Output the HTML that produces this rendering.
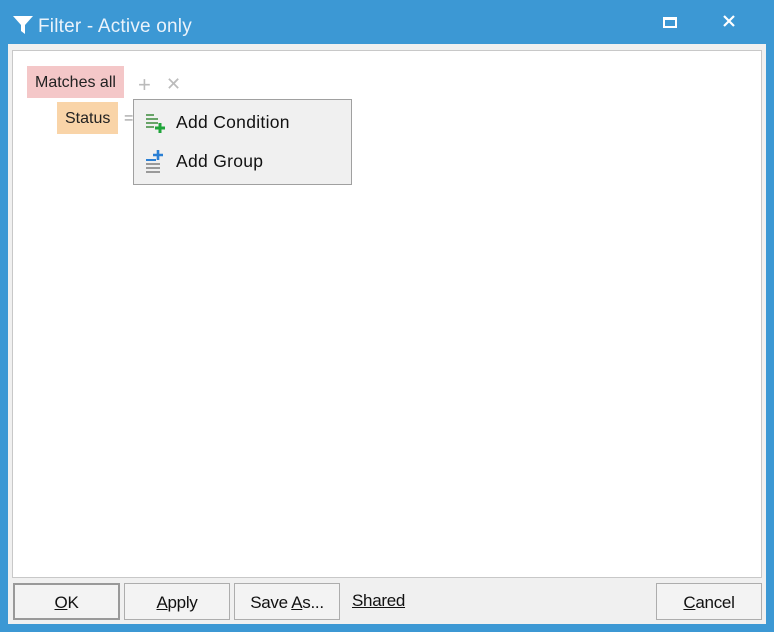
<!DOCTYPE html>
<html><head><style>
body{margin:0;width:774px;height:632px;background:#3c98d4;position:relative;overflow:hidden;font-family:"Segoe UI","Liberation Sans",sans-serif;}
.abs{position:absolute}
.title{left:38px;top:16px;color:#eaf3fb;font-size:19px;letter-spacing:0.2px}
.frame{left:8px;top:44px;width:758px;height:580px;background:#f0f0f0;}
.inner{left:12px;top:50px;width:748px;height:526px;background:#fff;border:1px solid #c8c8c8;}
.tag{font-size:16px;color:#222;padding:0 8px;height:32px;line-height:33px}
.btn{top:583px;height:35px;border:1px solid #adadad;background:#f3f3f3;font-size:17px;text-align:center;line-height:37px;color:#111;width:104px;letter-spacing:-0.3px}
.menu{left:133px;top:99px;width:217px;height:84px;background:#f0f0f0;border:1px solid #a0a0a0;}
.mi{font-size:17.5px;color:#111;left:42px;letter-spacing:0.3px}
</style></head><body>
<svg class="abs" style="left:12px;top:14px" width="22" height="22" viewBox="0 0 22 22"><path d="M1 2H21L13 11V20L9 17V11Z" fill="#fff"/></svg>
<div class="abs title">Filter - Active only</div>
<div class="abs" style="left:663px;top:17px;width:14px;height:11px;border:2px solid #fff;border-top-width:3px;box-sizing:border-box"></div>
<svg class="abs" style="left:722px;top:14px" width="14" height="14"><path d="M2 2L12 12M12 2L2 12" stroke="#fff" stroke-width="2.2"/></svg>
<div class="abs frame"></div>
<div class="abs inner"></div>
<div class="abs tag" style="left:27px;top:66px;background:#f4c7c8">Matches all</div>
<div class="abs" style="left:138px;top:72px;font-size:22px;color:#bbb">+</div>
<div class="abs" style="left:166px;top:74px;font-size:18px;color:#bbb">✕</div>
<div class="abs tag" style="left:57px;top:102px;background:#f9d4a8">Status</div>
<div class="abs" style="left:124px;top:110px;color:#999;font-size:16px">=</div>
<div class="abs menu">
<svg class="abs" style="left:10px;top:12px" width="22" height="22"><path d="M2 3h8M2 7h12M2 11h12M2 15h8" stroke="#3a8a3a" stroke-width="1.6"/><path d="M11 16h10M16 11v10" stroke="#1fa53a" stroke-width="3"/></svg>
<div class="abs mi" style="top:12px">Add Condition</div>
<svg class="abs" style="left:10px;top:50px" width="22" height="24"><path d="M9 5h10M14 0v10" stroke="#2a7fd4" stroke-width="2.6"/><path d="M2 10h10" stroke="#2a7fd4" stroke-width="2"/><path d="M2 14h14M2 18h14M2 22h14" stroke="#666" stroke-width="1.3"/></svg>
<div class="abs mi" style="top:51px">Add Group</div>
</div>
<div class="abs btn" style="left:13px;border:2px solid #999;width:103px;height:33px;line-height:35px"><u>O</u>K</div>
<div class="abs btn" style="left:124px"><u>A</u>pply</div>
<div class="abs btn" style="left:234px">Save <u>A</u>s...</div>
<div class="abs" style="left:352px;top:591px;font-size:17px;color:#111;letter-spacing:-0.3px"><u>Shared</u></div>
<div class="abs btn" style="left:656px"><u>C</u>ancel</div>
</body></html>
